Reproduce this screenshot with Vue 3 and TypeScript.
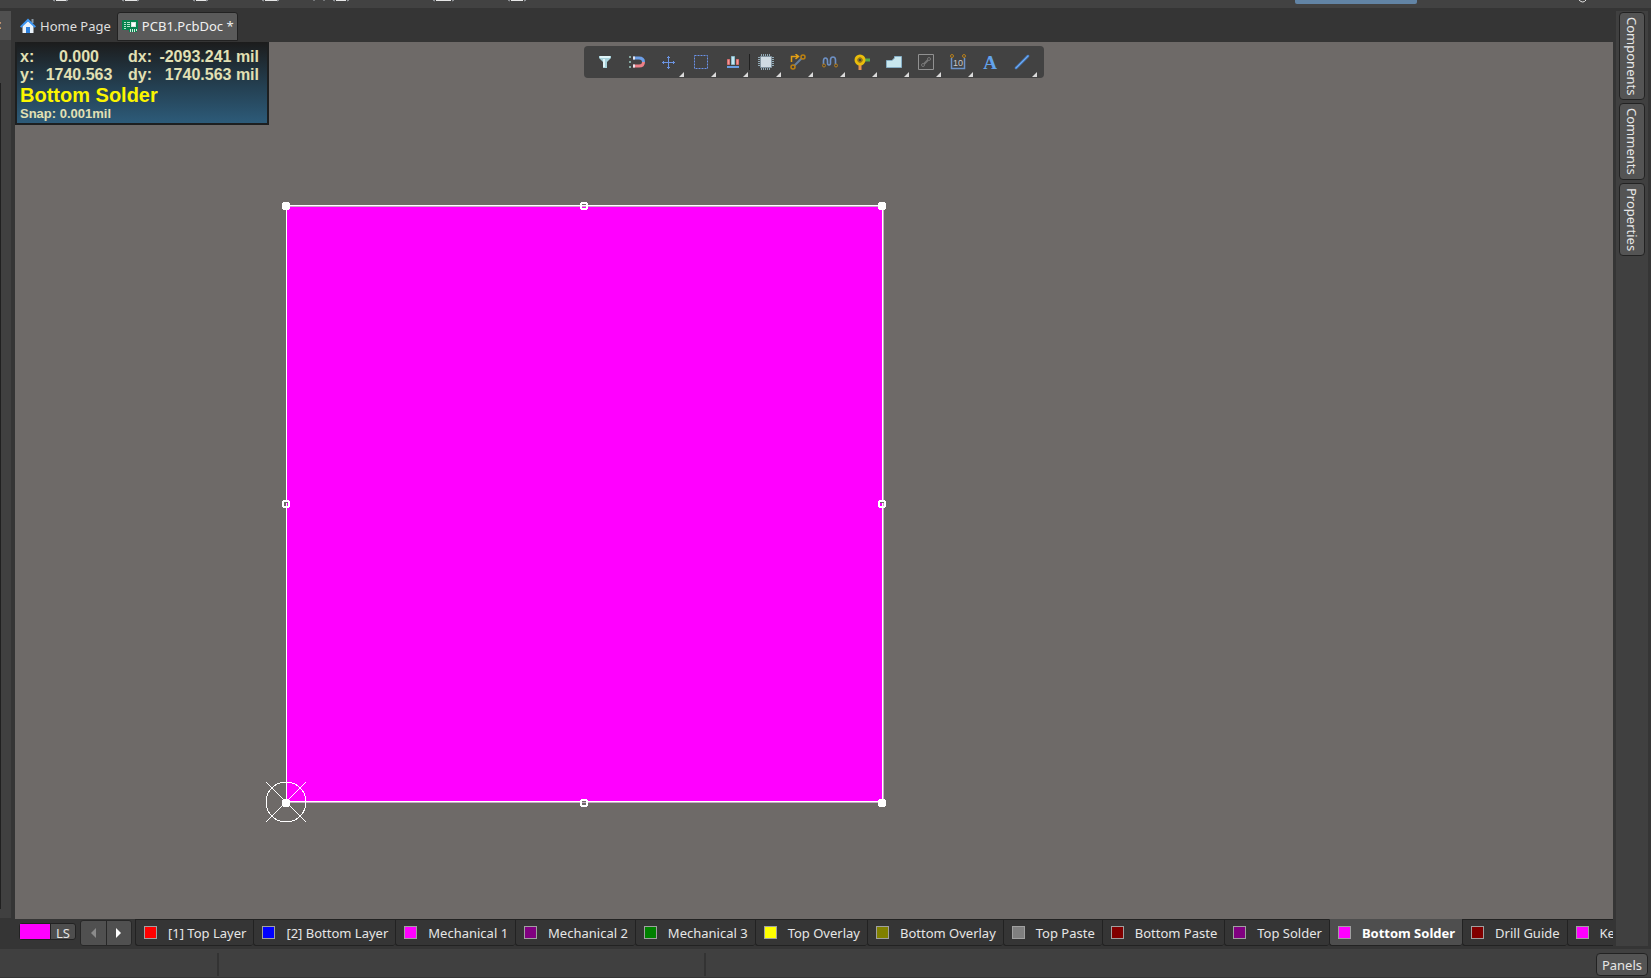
<script setup lang="ts">
import { ref } from 'vue'

interface Layer {
  name: string
  color: string
}

interface Tool {
  id: string
  label: string
  menu: boolean
}

const layers: Layer[] = [
  { name: '[1] Top Layer', color: '#ff0000' },
  { name: '[2] Bottom Layer', color: '#0000ff' },
  { name: 'Mechanical 1', color: '#ff00ff' },
  { name: 'Mechanical 2', color: '#800080' },
  { name: 'Mechanical 3', color: '#008000' },
  { name: 'Top Overlay', color: '#ffff00' },
  { name: 'Bottom Overlay', color: '#808000' },
  { name: 'Top Paste', color: '#808080' },
  { name: 'Bottom Paste', color: '#800000' },
  { name: 'Top Solder', color: '#800080' },
  { name: 'Bottom Solder', color: '#ff00ff' },
  { name: 'Drill Guide', color: '#800000' },
  { name: 'Keep-Out Layer', color: '#ff00ff' },
]

const tools: Tool[] = [
  { id: 'filter', label: 'Selection filter', menu: false },
  { id: 'snap', label: 'Snapping', menu: false },
  { id: 'move', label: 'Move', menu: true },
  { id: 'select', label: 'Select', menu: true },
  { id: 'align', label: 'Align', menu: true },
  { id: 'component', label: 'Component', menu: true },
  { id: 'route', label: 'Route', menu: true },
  { id: 'tune', label: 'Length tuning', menu: true },
  { id: 'via', label: 'Via', menu: true },
  { id: 'polygon', label: 'Polygon', menu: true },
  { id: 'room', label: 'Room', menu: true },
  { id: 'dimension', label: 'Dimension', menu: true },
  { id: 'text', label: 'Text', menu: false },
  { id: 'line', label: 'Line', menu: true },
]

const sidePanels: string[] = ['Components', 'Comments', 'Properties']
const activeLayer = ref<string>('Bottom Solder')

const corners = [[267, 160], [863, 160], [267, 757], [863, 757]].map(([x, y]) => ({ x, y }))
const middles = [[565, 160], [267, 458], [863, 458], [565, 757]].map(([x, y]) => ({ x, y }))
</script>

<template>
  <div class="app">
    <header class="menu">
      <svg class="menu-marks" width="1651" height="8" aria-hidden="true">
        <g fill="none" stroke="#e6e6e6">
          <path d="M53 0l2 1M66 1l2-1M122 0l2 1M137 1l2-1M193 0l2 1M206 1l2-1M262 0l2 1M277 1l2-1M314 0v1M324 0v1M333 0l2 1M347 1l2-1M433 0l2 1M452 1l2-1M508 0l2 1M524 1l2-1" stroke="#a7abb0" />
          <path d="M56 .5h10M125 .5h12M196 .5h10M265 .5h12M336 .5h10M436 .5h15M511 .5h12" />
          <path d="M1579 0q4 4 7 0" />
        </g>
        <path d="M1295 0h122v2q0 2-2 2h-118q-2 0-2-2z" fill="#6284a5" />
      </svg>
    </header>

    <div class="body">
      <aside class="left-rail"><span class="left-stub">:</span><span class="left-panel"></span></aside>

      <main class="workspace">
        <nav class="doc-tabs">
          <button class="doc-tab">
            <svg width="16" height="16" viewBox="0 0 16 16">
              <path d="M11.500 1h2v4h-2z" fill="#8b98a5" />
              <path d="M2.500 7.500L8 3l5.500 4.500V15h-11z" fill="#edf4fb" />
              <path d="M0 8.500L8 .5l8 8-1.300 1.200L8 3.500 1.300 9.700z" fill="#3e97f4" />
              <path d="M6 9h4v6H6z" fill="#2d80dc" />
            </svg>
            <span>Home Page</span>
          </button>
          <button class="doc-tab current">
            <svg width="16" height="14" viewBox="0 0 16 14">
              <path d="M0 1h16v10h-1v2H7v-2H0z" fill="#07834f" />
              <path d="M2 3.500h2M2 5.500h2M2 7.500h2M2 9.500h2M5 3.500h3M5 5.500h3M5 7.500h3" stroke="#b8e6cc" />
              <path d="M9 3h5v5H9z" fill="#d8e9df" />
              <path d="M10 4h3v3h-3z" fill="#fff" />
              <path d="M8.500 10v3M10.500 10v3M12.500 10v3M14.500 10v2" stroke="#cfeedd" />
            </svg>
            <span>PCB1.PcbDoc *</span>
          </button>
        </nav>

        <section class="canvas" aria-label="PCB canvas">
          <svg class="board" width="100%" height="100%" shape-rendering="crispEdges">
            <rect x="271" y="163" width="597" height="597" fill="#ff00ff" />
            <path d="M272 164.500H867M272 760.500H867M868.500 164V760" stroke="#c9a9c9" fill="none" />
            <path d="M271 163.500H867.500V759.500H271.500V163" fill="none" stroke="#fff" />
            <circle cx="271" cy="760" r="20" fill="none" stroke="#fff" />
            <path d="M251 740l40 40M291 740l-40 40" stroke="#fff" />
            <path v-for="p in corners" :key="`c${p.x}-${p.y}`" :d="`M${p.x + 1} ${p.y}h6v1h1v6h-1v1h-6v-1h-1v-6h1z`" fill="#fff" />
            <g v-for="p in middles" :key="`m${p.x}-${p.y}`">
              <path :d="`M${p.x + 1} ${p.y}h6v1h1v6h-1v1h-6v-1h-1v-6h1zM${p.x + 2} ${p.y + 2}v4h4v-4z`" fill="#fff" fill-rule="evenodd" />
              <path :d="`M${p.x + 2} ${p.y + 2.5}h4`" stroke="#6e6a68" />
            </g>
          </svg>

          <div class="hud">
            <div class="coords">
              <span>x:</span><span class="mid">0.000</span><span>dx:</span><span class="end">-2093.241 mil</span>
              <span>y:</span><span class="mid">1740.563</span><span>dy:</span><span class="end">1740.563 mil</span>
            </div>
            <div class="hud-layer">Bottom Solder</div>
            <div class="hud-snap">Snap: 0.001mil</div>
          </div>

          <div class="toolbar" role="toolbar" aria-label="Active bar">
            <button v-for="t in tools" :key="t.id" class="tool" :class="{ 'has-menu': t.menu, split: t.id === 'component' }" :aria-label="t.label">
              <svg width="16" height="16" viewBox="0 0 16 16" fill="none">
                <template v-if="t.id === 'filter'">
                  <path d="M2 2h12v2l-4 4v6H6V8L2 4z" fill="#a9d3dc" />
                  <path d="M3 3h10M7 5v8" stroke="#e0f4f8" stroke-width="2" />
                </template>
                <template v-else-if="t.id === 'snap'">
                  <path d="M0 2h2v2H0zM0 7h2v2H0zM0 12h2v2H0z" fill="#83a6a0" />
                  <path d="M4 4h6q4.500 0 4.500 4" stroke="#6d9fe8" stroke-width="3" />
                  <path d="M14.500 8q0 4-4.500 4H4" stroke="#ed8088" stroke-width="3" />
                  <path d="M4 12h2M4 4h2" stroke="#e5e4ec" stroke-width="3" />
                </template>
                <path v-else-if="t.id === 'move'" d="M7.500 2v13M1 8.500h13M6 3.500h3M6 13.500h3M2.500 7v3M12.500 7v3" stroke="#6b93e0" />
                <rect v-else-if="t.id === 'select'" x="1.500" y="1.500" width="13" height="13" stroke="#6b92e8" stroke-dasharray="2 1" />
                <template v-else-if="t.id === 'align'">
                  <path d="M2.500 5.500h2v5h-2zM11.500 5.500h2v5h-2z" fill="#f09a96" stroke="#d96f70" />
                  <path d="M6.500 2.500h3v8h-3z" fill="#c3e8f2" stroke="#8cbacb" />
                  <path d="M2 13h12" stroke="#6a9fe4" stroke-width="2" />
                </template>
                <template v-else-if="t.id === 'component'">
                  <path d="M3.500 0v16M5.500 0v16M7.500 0v16M9.500 0v16M11.500 0v16M0 3.500h16M0 5.500h16M0 7.500h16M0 9.500h16M0 11.500h16" stroke="#91a9b5" />
                  <path d="M2.500 2.500h11v11h-11z" fill="#cfdbe3" stroke="#8294a0" />
                </template>
                <template v-else-if="t.id === 'route'">
                  <path d="M1.500 8V2.500h6M5.500 0l3 2.500-3 2.500" stroke="#e4a014" stroke-width="1.500" />
                  <path d="M4 12l8-8" stroke="#66819f" stroke-width="2" />
                  <circle cx="3" cy="13" r="2" stroke="#bd8110" stroke-width="1.500" />
                  <circle cx="13" cy="3" r="2" stroke="#bd8110" stroke-width="1.500" />
                </template>
                <template v-else-if="t.id === 'tune'">
                  <path d="M1.500 10V7q0-3 2-3t2 3v2q0 2 1.500 2t1.500-2V6q0-3 2.500-3t2.500 3v4" stroke="#6e91c5" stroke-width="1.600" />
                  <circle cx="2" cy="11.500" r="1.500" stroke="#b77f1c" />
                  <circle cx="14" cy="11.500" r="1.500" stroke="#b77f1c" />
                </template>
                <template v-else-if="t.id === 'via'">
                  <path d="M9 6h7" stroke="#57ab46" stroke-width="3" />
                  <path d="M6 10v6" stroke="#e9944b" stroke-width="3" />
                  <circle cx="6" cy="6" r="4" stroke="#eabd0a" stroke-width="3" />
                  <circle cx="6" cy="6" r="2" fill="#43443a" stroke="#b78b07" />
                </template>
                <path v-else-if="t.id === 'polygon'" d="M.5 6.500H6L8.500 4V2.500h7v11H.5z" fill="#c9e8ef" stroke="#87afc6" />
                <template v-else-if="t.id === 'room'">
                  <path d="M.5.5h15v15H.5z" stroke="#919191" />
                  <path d="M6 10l4-4" stroke="#777" stroke-width="2" />
                  <circle cx="5" cy="11" r="1.500" stroke="#777" />
                  <circle cx="11" cy="5" r="1.500" stroke="#777" />
                </template>
                <template v-else-if="t.id === 'dimension'">
                  <path d="M1.500 4v10.500h13V4" stroke="#6d93c8" stroke-width="1.500" />
                  <circle cx="2" cy="2" r="1.500" stroke="#b77f1c" />
                  <circle cx="14" cy="2" r="1.500" stroke="#b77f1c" />
                  <text x="8" y="12" text-anchor="middle" class="dim-text">10</text>
                </template>
                <text v-else-if="t.id === 'text'" x="8" y="15" text-anchor="middle" class="letter">A</text>
                <template v-else>
                  <path d="M2 14L14 2" stroke="#4c86cf" stroke-width="2.500" stroke-linecap="round" />
                  <path d="M2 14L14 2" stroke="#74adf0" />
                </template>
              </svg>
            </button>
          </div>
        </section>

        <footer class="layers">
          <button class="layer-set"><span class="set-color"></span><span class="set-name">LS</span></button>
          <div class="nav">
            <button aria-label="Previous layer"><svg width="5" height="10"><path d="M5 0v10L0 5z" fill="#8b8b8b" /></svg></button>
            <button aria-label="Next layer"><svg width="5" height="10"><path d="M0 0v10l5-5z" fill="#fff" /></svg></button>
          </div>
          <div class="layer-tabs">
            <button v-for="l in layers" :key="l.name" class="layer-tab" :class="{ active: l.name === activeLayer }" @click="activeLayer = l.name">
              <span class="swatch" :style="{ background: l.color }"></span>
              <span>{{ l.name }}</span>
            </button>
          </div>
        </footer>
      </main>

      <aside class="right-rail">
        <button v-for="p in sidePanels" :key="p" class="side-tab">{{ p }}</button>
      </aside>
    </div>

    <footer class="status">
      <span class="cell first"></span>
      <span class="cell second"></span>
      <button class="panels">Panels</button>
    </footer>
  </div>
</template>

<style>
html,
body {
  background: #353535;
}
</style>

<style scoped>
.app {
  display: flex;
  flex-direction: column;
  height: 100vh;
  overflow: hidden;
  background: #353535;
  color: #e6e6e6;
  font: 13px/18px "Noto Sans", "Open Sans", sans-serif;
}
.app * {
  box-sizing: border-box;
}
button {
  margin: 0;
  padding: 0;
  border: 0;
  background: none;
  color: inherit;
  font: inherit;
}
svg {
  display: block;
  flex: none;
}
.menu {
  height: 8px;
  flex: none;
  overflow: hidden;
  background: #424242;
}
.body {
  display: flex;
  flex: 1;
  min-height: 0;
}
.left-rail {
  display: flex;
  flex-direction: column;
  width: 11px;
  margin: 3px 4px 31px 0;
  background: #404040;
  overflow: hidden;
}
.left-stub {
  height: 29px;
  margin-left: -2px;
  padding-top: 4px;
  background: #505050;
}
.left-panel {
  flex: 1;
  margin: 43px 0 9px;
  border-left: 1px solid #202020;
}
.workspace {
  display: flex;
  flex: 1;
  flex-direction: column;
  min-width: 0;
}
.doc-tabs {
  display: flex;
  height: 34px;
  flex: none;
  padding-top: 4px;
}
.doc-tab {
  display: flex;
  align-items: center;
  gap: 4px;
  height: 29px;
  padding: 0 6px 2px 5px;
  color: #dedede;
  white-space: nowrap;
}
.doc-tab.current {
  padding: 0 3px 2px 4px;
  border: 1px solid #222;
  border-radius: 3px 3px 0 0;
  background: #5a5a5a;
  color: #f0f0f0;
}
.canvas {
  position: relative;
  flex: 1;
  min-height: 0;
  background: #6e6a68;
  overflow: hidden;
}
.board {
  width: 100%;
  height: 100%;
}
.hud {
  position: absolute;
  top: 0;
  left: 0;
  width: 254px;
  height: 83px;
  padding: 6px 8px 0 3px;
  border: 2px solid #1d1f20;
  border-top: 0;
  background: linear-gradient(#1c1c1c, #244052 55%, #2d5b79);
  color: #e2e0b4;
  font: bold 16px/18px "Liberation Sans", sans-serif;
}
.coords {
  display: grid;
  grid-template-columns: 18px 80px 26px 1fr;
  column-gap: 5px;
  white-space: nowrap;
}
.coords .mid {
  padding-right: 8px;
  text-align: center;
}
.coords .end {
  text-align: right;
}
.hud-layer {
  font-size: 20px;
  line-height: 22px;
  color: #fbf500;
}
.hud-snap {
  font-size: 13px;
  line-height: 16px;
}
.toolbar {
  position: absolute;
  top: 4px;
  left: 50%;
  display: flex;
  height: 32px;
  padding: 0 6px 0 5px;
  border-radius: 4px;
  background: #424242;
  transform: translateX(-50%);
}
.tool {
  position: relative;
  display: grid;
  place-items: center;
  width: 32px;
}
.tool.has-menu::after {
  content: "";
  position: absolute;
  right: 1px;
  bottom: 1px;
  width: 5px;
  height: 5px;
  background: #dadada;
  clip-path: polygon(100% 0, 100% 100%, 0 100%);
}
.tool.split {
  margin-left: 1px;
}
.tool.split::before {
  content: "";
  position: absolute;
  left: -1px;
  top: 8px;
  width: 1px;
  height: 16px;
  background: #202020;
}
.dim-text {
  fill: #c8c8c8;
  font: 9px "Liberation Sans", sans-serif;
}
.letter {
  fill: #62a3ec;
  font: bold 19px "Liberation Serif", serif;
}
.layers {
  display: flex;
  height: 30px;
  flex: none;
}
.layer-set {
  display: flex;
  width: 57px;
  height: 17px;
  margin: 4px 4px 0;
  border: 1px solid #222;
  border-radius: 3px;
  background: #4e4e4e;
}
.set-color {
  width: 31px;
  height: 15px;
  border-right: 1px solid #222;
  background: #f0f;
}
.set-name {
  flex: 1;
  line-height: 18px;
  text-align: center;
}
.nav {
  display: flex;
  width: 52px;
  height: 26px;
  margin: 1px 3px 0 0;
  border: 1px solid #272727;
  border-radius: 3px;
  background: #505050;
}
.nav button {
  display: grid;
  flex: 1;
  place-items: center;
}
.nav button + button {
  border-left: 1px solid #272727;
}
.layer-tabs {
  display: flex;
  flex: 1;
  height: 27px;
  min-width: 0;
  overflow: hidden;
}
.layer-tab {
  display: flex;
  flex: none;
  align-items: center;
  gap: 11px;
  padding: 0 7px 0 8px;
  border: solid #222;
  border-width: 1px 0 1px 1px;
  border-radius: 0 0 3px 3px;
  white-space: nowrap;
}
.layer-tab.active {
  border-top-color: #4e4e4e;
  background: #4e4e4e;
  color: #fff;
  font-weight: bold;
}
.swatch {
  width: 13px;
  height: 13px;
  border: 1px solid #a0a0a0;
}
.right-rail {
  display: flex;
  flex: none;
  flex-direction: column;
  align-items: center;
  gap: 3px;
  width: 32px;
  margin: 3px;
  padding-top: 1px;
  background: #404040;
}
.side-tab {
  width: 26px;
  padding: 4px 0;
  border: 1px solid #222;
  border-radius: 4px;
  background: #545454;
  writing-mode: vertical-rl;
  line-height: 24px;
}
.status {
  display: flex;
  flex: none;
  height: 29px;
  padding: 4px 3px 1px 0;
  border-bottom: 1px solid #353535;
  background: #404040;
}
.cell {
  border-right: 2px solid #333;
}
.cell.first {
  width: 219px;
}
.cell.second {
  width: 487px;
}
.panels {
  height: 23px;
  margin-left: auto;
  padding: 0 5px;
  border: 1px solid #222;
  border-radius: 4px;
  background: #545454;
}
</style>
